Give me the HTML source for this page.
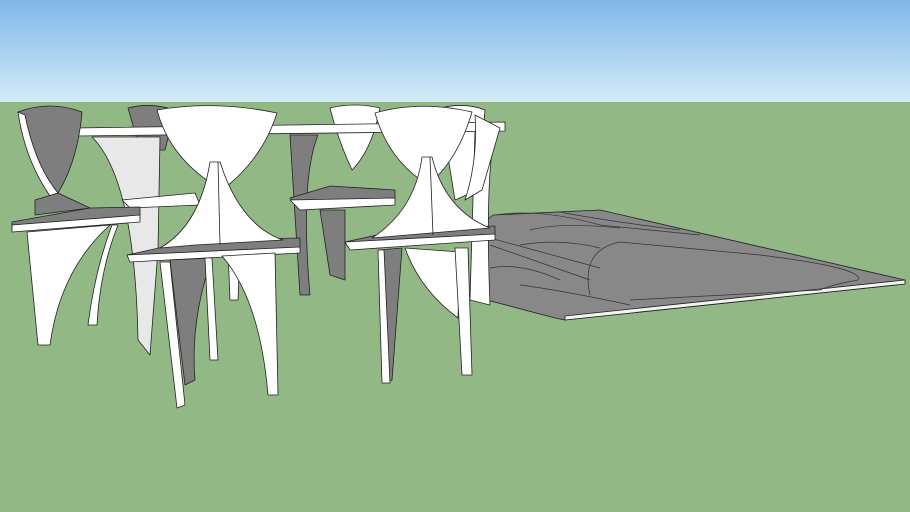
<!DOCTYPE html>
<html><head><style>html,body{margin:0;padding:0;width:910px;height:512px;overflow:hidden}svg{display:block}</style></head>
<body>
<svg width="910" height="512" viewBox="0 0 910 512" xmlns="http://www.w3.org/2000/svg">
<defs><linearGradient id="sky" x1="0" y1="0" x2="0" y2="1"><stop offset="0" stop-color="#7fb7e8"/><stop offset="1" stop-color="#d3ebf6"/></linearGradient></defs>
<rect width="910" height="102" fill="url(#sky)"/>
<rect y="102" width="910" height="410" fill="#92b886"/>
<g stroke="#222" stroke-width="0.8" stroke-linejoin="round">
<!-- mat -->
<polygon points="493,215 600,210 905,280 905,284 565,320 555,318 487,300 487,220" fill="#888"/>
<polygon points="565,316 905,280 905,284 565,320" fill="#f2f2f2"/>
<g fill="none" stroke="#333" stroke-width="0.7">
<path d="M590,295 Q580,250 620,242 L760,255 Q865,268 858,280 Q830,285 820,290 L630,300"/>
<path d="M495,215 Q540,208 600,225 M530,230 Q560,222 620,228 M520,245 Q560,238 600,248 M490,268 Q520,262 560,280 M520,285 Q560,290 630,305"/>
<path d="M490,245 L590,280 M490,238 L600,268"/>
<path d="M560,212 Q600,220 680,230 M600,225 L700,235"/>
</g>
<!-- back chairs -->
<path d="M128,108 Q150,102 175,110 L165,150 L140,150 Z" fill="#7e7e7e"/>
<path d="M330,108 Q355,102 380,108 Q372,150 352,170 Q338,140 330,108 Z" fill="#fff"/>
<path d="M440,108 Q465,102 485,110 L478,190 L455,200 Z" fill="#fff"/>
<!-- table -->
<polygon points="75,128 505,122 505,131 75,136" fill="#fff"/>
<path d="M92,137 L160,137 L158,250 L150,355 L138,340 Q135,180 92,137 Z" fill="#e8e8e8"/>
<path d="M290,135 L318,135 Q300,180 310,295 L300,295 Z" fill="#7e7e7e"/>
<path d="M495,132 L475,132 L470,300 L490,305 Q485,180 495,132 Z" fill="#fff"/>
<!-- middle chair seats -->
<polygon points="290,198 330,186 395,190 395,200 300,206" fill="#7e7e7e"/>
<polygon points="290,200 395,198 395,205 300,210" fill="#fff"/>
<polygon points="320,210 345,210 345,280 330,275" fill="#7e7e7e"/>
<polygon points="122,200 195,193 200,205 130,208" fill="#fff"/>
<polygon points="228,250 240,250 238,300 230,300" fill="#fff"/>
<!-- left chair -->
<path d="M18,112 Q50,100 82,112 Q78,160 58,193 Q30,160 18,112 Z" fill="#7e7e7e"/>
<path d="M18,112 L25,115 Q35,165 58,193 L50,196 Q25,160 18,112 Z" fill="#fff"/>
<polygon points="35,200 58,193 90,208 35,215" fill="#7e7e7e"/>
<polygon points="12,222 90,208 140,207 140,218 12,230" fill="#7e7e7e"/>
<polygon points="12,225 140,215 140,222 12,232" fill="#fff"/>
<path d="M27,232 L110,225 Q60,270 50,345 L38,345 Z" fill="#fff"/>
<path d="M112,225 L118,225 Q100,270 97,325 L88,325 Q95,270 112,225 Z" fill="#fff"/>
<!-- front chair 1 -->
<path d="M157,110 Q215,100 277,113 Q262,160 222,190 Q170,160 157,110 Z" fill="#fff"/>
<polygon points="127,255 195,240 300,238 300,250 135,258" fill="#7e7e7e"/>
<polygon points="127,255 300,247 300,253 130,262" fill="#fff"/>
<path d="M210,162 L220,162 Q240,225 283,240 L195,245 L160,248 Q200,225 210,162 Z" fill="#fff"/>
<line x1="218" y1="162" x2="220" y2="245"/>
<path d="M170,260 L212,258 Q190,320 195,380 L185,385 Z" fill="#7e7e7e"/>
<path d="M160,262 L170,262 L185,405 L177,408 Z" fill="#fff"/>
<path d="M205,258 L212,258 L218,360 L210,360 Z" fill="#fff"/>
<path d="M222,256 L275,253 L278,395 L268,395 Q260,300 222,256 Z" fill="#fff"/>
<!-- front chair 2 -->
<path d="M375,113 Q420,100 472,112 Q458,160 428,185 Q388,160 375,113 Z" fill="#fff"/>
<path d="M475,115 L500,128 L482,190 L465,200 Q478,160 475,115 Z" fill="#fff"/>
<polygon points="345,242 400,230 495,226 495,236 355,246" fill="#7e7e7e"/>
<polygon points="345,242 495,234 495,240 350,250" fill="#fff"/>
<path d="M422,157 L432,157 Q445,210 490,228 L372,238 Q415,210 422,157 Z" fill="#fff"/>
<line x1="430" y1="157" x2="433" y2="235"/>
<path d="M380,250 L402,248 L392,380 L384,383 Z" fill="#7e7e7e"/>
<path d="M378,250 L384,250 L390,383 L382,383 Z" fill="#fff"/>
<path d="M405,248 Q420,290 458,318 L460,252 Z" fill="#fff"/>
<path d="M455,248 L468,248 L472,375 L462,375 Z" fill="#fff"/>
</g>
</svg>
</body></html>
